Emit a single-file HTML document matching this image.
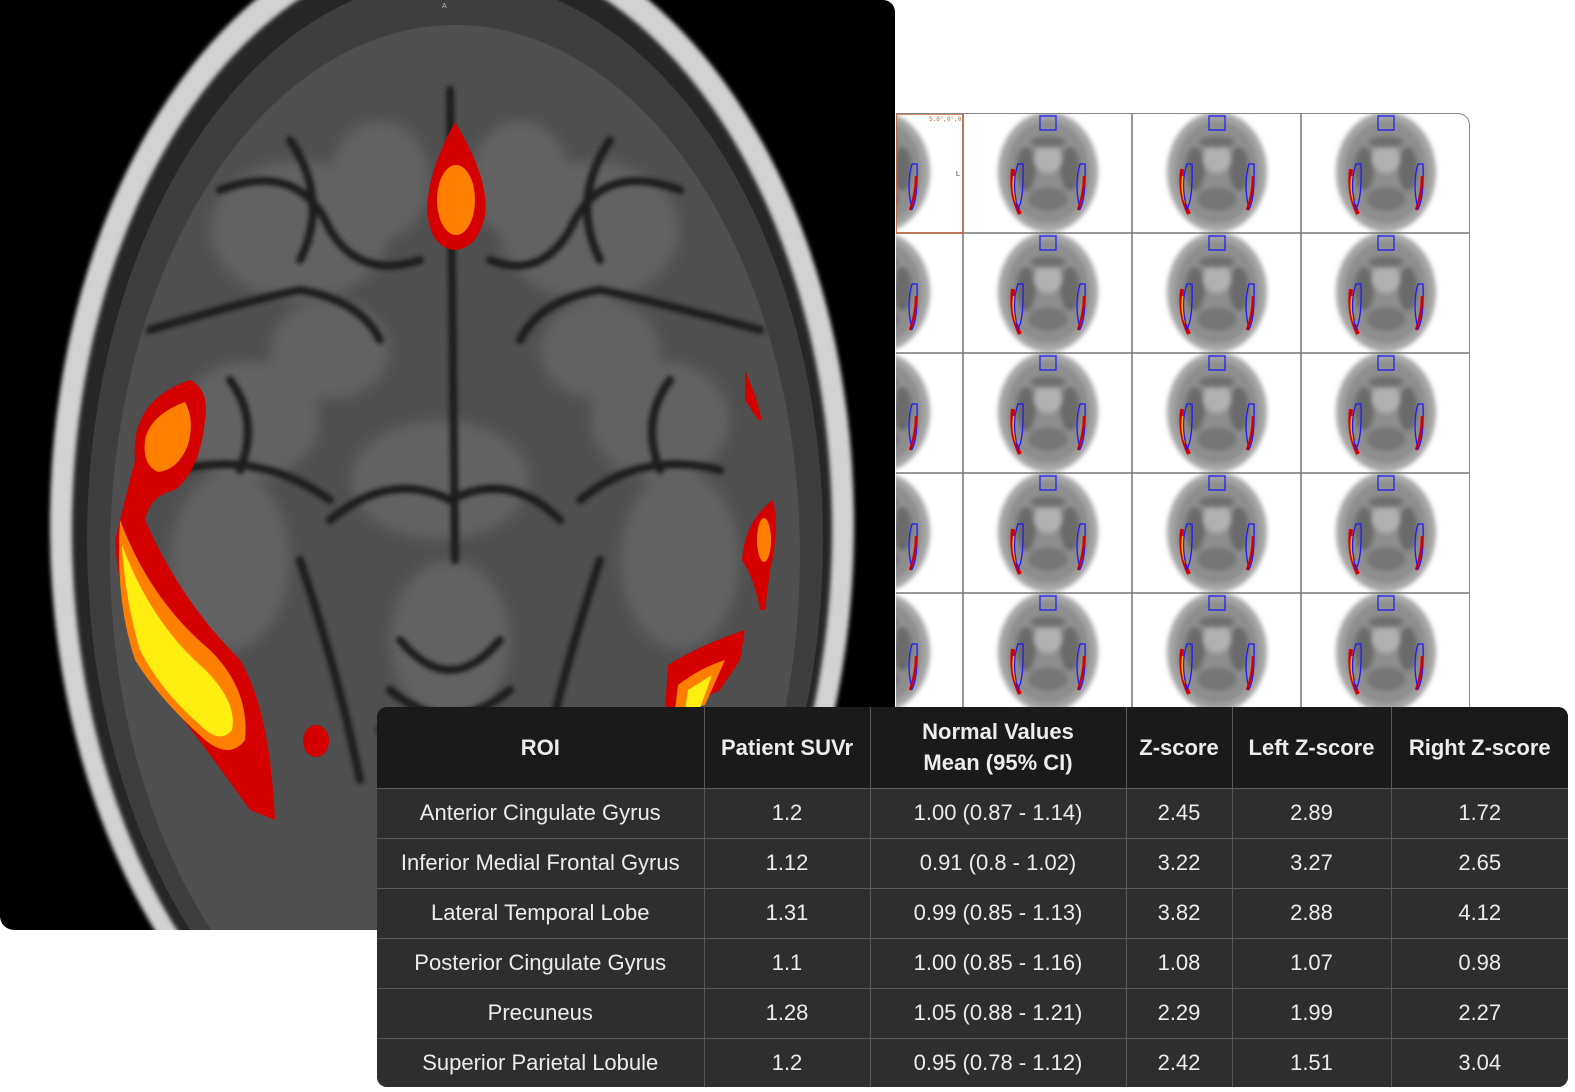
<!DOCTYPE html>
<html><head><meta charset="utf-8"><style>
html,body{margin:0;padding:0;background:#fff;width:1575px;height:1092px;overflow:hidden;position:relative;font-family:"Liberation Sans",Arial,sans-serif}
#mri{position:absolute;left:0;top:0;width:895px;height:930px;background:#000;border-radius:0 12px 0 14px;overflow:hidden}
#grid{position:absolute;left:896px;top:113px;width:574px;height:597px;background:#fff;border-top-right-radius:12px;overflow:hidden;border-top:1px solid #888;border-right:1px solid #888;box-sizing:border-box}
#wrap{position:absolute;left:377px;top:707px;width:1191px;height:380px;border-radius:10px;overflow:hidden;background:#2e2e2e}
table{width:1191px;border-collapse:collapse;color:#ececec;font-size:22px;text-align:center;table-layout:fixed}
th{background:#1a1a1a;font-weight:bold;height:80px;padding:0;border-right:1px solid #5a5a5a;line-height:31px;box-sizing:border-box}
td{background:#2e2e2e;height:50px;padding:0;border-right:1px solid #5a5a5a;border-top:1px solid #5a5a5a;box-sizing:border-box;white-space:nowrap}
th:last-child,td:last-child{border-right:none}
</style></head><body>
<div id="mri">
<svg width="895" height="930" viewBox="0 0 895 930">
<defs>
<filter id="bl"><feGaussianBlur stdDeviation="2"/></filter>
<filter id="bl2"><feGaussianBlur stdDeviation="6"/></filter>
</defs>
<ellipse cx="452" cy="525" rx="402" ry="602" fill="#d2d2d2" filter="url(#bl)"/>
<ellipse cx="452" cy="530" rx="380" ry="580" fill="#262626" filter="url(#bl)"/>
<ellipse cx="455" cy="540" rx="368" ry="562" fill="#3e3e3e"/>
<ellipse cx="455" cy="555" rx="345" ry="530" fill="#4f4f4f"/>
<g fill="#626262" filter="url(#bl2)">
<ellipse cx="300" cy="230" rx="90" ry="70"/><ellipse cx="590" cy="230" rx="90" ry="70"/>
<ellipse cx="380" cy="180" rx="50" ry="60"/><ellipse cx="520" cy="180" rx="50" ry="60"/>
<ellipse cx="250" cy="420" rx="70" ry="60"/><ellipse cx="660" cy="420" rx="70" ry="60"/>
<ellipse cx="440" cy="480" rx="90" ry="60"/><ellipse cx="450" cy="640" rx="60" ry="80"/>
<ellipse cx="230" cy="560" rx="60" ry="90"/><ellipse cx="680" cy="560" rx="60" ry="90"/>
<ellipse cx="600" cy="350" rx="60" ry="50"/><ellipse cx="330" cy="350" rx="60" ry="50"/>
</g>
<g fill="none" stroke="#1e1e1e" stroke-width="8" stroke-linecap="round" filter="url(#bl)">
<path d="M450 90 L455 560"/>
<path d="M220 190 Q300 160 330 230 Q360 280 420 260"/>
<path d="M680 190 Q600 160 570 230 Q540 280 490 260"/>
<path d="M150 330 Q250 300 300 290 Q360 300 380 340"/>
<path d="M760 330 Q650 300 600 290 Q540 300 520 340"/>
<path d="M330 520 Q390 470 450 500 Q510 470 560 520"/>
<path d="M300 560 Q340 680 360 780"/>
<path d="M600 560 Q560 680 540 780"/>
<path d="M180 470 Q260 450 330 500"/>
<path d="M720 470 Q640 450 580 500"/>
<path d="M230 380 Q260 420 240 470"/>
<path d="M670 380 Q640 420 660 470"/>
<path d="M400 640 Q450 700 500 640"/>
<path d="M390 690 Q450 740 510 690"/>
<path d="M380 730 Q450 790 520 730"/>
<path d="M290 140 Q330 200 300 260"/><path d="M610 140 Q570 200 600 260"/>
</g>
<path d="M455 122 Q490 180 485 215 Q478 248 455 250 Q430 248 427 210 Q428 170 455 122Z" fill="#d40000"/>
<ellipse cx="456" cy="200" rx="19" ry="35" fill="#ff8000"/>
<path d="M190 380 Q210 390 205 420 Q200 470 175 490 Q150 495 145 520 Q180 600 240 660 Q270 710 275 820 L250 810 Q200 740 160 690 Q120 620 115 540 Q125 500 135 460 Q130 400 190 380Z" fill="#d40000"/>
<path d="M185 402 Q195 420 188 445 Q178 470 158 472 Q142 465 145 440 Q150 415 185 402Z" fill="#ff8000"/>
<path d="M120 520 Q150 600 210 650 Q250 690 245 740 Q230 760 205 740 Q160 700 135 660 Q115 600 120 520Z" fill="#ff8000"/>
<path d="M122 545 Q150 620 200 665 Q238 700 232 730 Q220 745 200 725 Q160 690 140 650 Q125 600 122 545Z" fill="#ffee10"/>
<ellipse cx="316" cy="741" rx="13" ry="16" fill="#d40000"/>
<path d="M773 500 Q780 530 770 570 L765 610 L760 610 Q755 580 742 560 Q745 520 773 500Z" fill="#d40000"/>
<ellipse cx="764" cy="540" rx="7" ry="22" fill="#ff8000"/>
<path d="M745 370 L755 395 L762 420 L758 420 L745 400Z" fill="#d40000"/>
<path d="M745 630 L740 660 L720 690 L680 710 L665 710 L668 665 Q700 645 745 630Z" fill="#d40000"/>
<path d="M725 660 L705 705 L675 710 L678 685 Q700 668 725 660Z" fill="#ff8000"/>
<path d="M712 675 L700 708 L685 710 L688 690Z" fill="#ffee10"/>
<text x="442" y="8" fill="#bbb" font-size="7" font-family="Liberation Sans">A</text>
</svg>
</div>
<div id="grid">
<svg width="574" height="597" viewBox="0 0 574 597">
<defs>
<filter id="gb"><feGaussianBlur stdDeviation="2.5"/></filter>
<g id="b">
<g filter="url(#gb)">
<ellipse cx="0" cy="58" rx="50" ry="60" fill="#a4a4a4"/>
<ellipse cx="0" cy="58" rx="42" ry="52" fill="#8e8e8e"/>
<ellipse cx="-22" cy="55" rx="10" ry="22" fill="#6a6a6a"/>
<ellipse cx="22" cy="55" rx="10" ry="22" fill="#6a6a6a"/>
<ellipse cx="0" cy="45" rx="14" ry="14" fill="#b0b0b0"/>
<ellipse cx="0" cy="28" rx="18" ry="6" fill="#6f6f6f"/>
<ellipse cx="0" cy="85" rx="20" ry="12" fill="#777"/>
</g>
<path d="M-35 55 Q-38 80 -28 100" stroke="#d40000" stroke-width="4" fill="none"/>
<path d="M-34 62 Q-36 78 -31 90" stroke="#ffb000" stroke-width="2" fill="none"/>
<path d="M-30 50 q-7 20 0 45 q6 -10 5 -45z" fill="none" stroke="#1a1aff" stroke-width="1.3"/>
<path d="M32 50 q-6 20 0 45 q6 -10 5 -45z" fill="none" stroke="#1a1aff" stroke-width="1.3"/>
<path d="M36 62 Q36 80 30 96" stroke="#d40000" stroke-width="2.5" fill="none"/>
<path d="M-8 2 h16 v14 h-16z" fill="none" stroke="#1a1aff" stroke-width="1.2"/>
</g>
</defs>
<g>
<use href="#b" x="-16" y="0"/><use href="#b" x="152" y="0"/><use href="#b" x="321" y="0"/><use href="#b" x="490" y="0"/>
<use href="#b" x="-16" y="120"/><use href="#b" x="152" y="120"/><use href="#b" x="321" y="120"/><use href="#b" x="490" y="120"/>
<use href="#b" x="-16" y="240"/><use href="#b" x="152" y="240"/><use href="#b" x="321" y="240"/><use href="#b" x="490" y="240"/>
<use href="#b" x="-16" y="360"/><use href="#b" x="152" y="360"/><use href="#b" x="321" y="360"/><use href="#b" x="490" y="360"/>
<use href="#b" x="-16" y="480"/><use href="#b" x="152" y="480"/><use href="#b" x="321" y="480"/><use href="#b" x="490" y="480"/>
</g>
<g stroke="#777" stroke-width="1.5">
<line x1="67" y1="0" x2="67" y2="597"/><line x1="236" y1="0" x2="236" y2="597"/><line x1="405" y1="0" x2="405" y2="597"/>
<line x1="0" y1="119" x2="574" y2="119"/><line x1="0" y1="239" x2="574" y2="239"/><line x1="0" y1="359" x2="574" y2="359"/><line x1="0" y1="479" x2="574" y2="479"/>
</g>
<rect x="0" y="0" width="67" height="119" fill="none" stroke="#c0603a" stroke-width="1.5"/>
<text x="33" y="7" fill="#b06030" font-size="6" font-family="Liberation Mono">5.6°,0°,0°</text>
<text x="60" y="62" fill="#333" font-size="7" font-family="Liberation Sans">L</text>
</svg>
</div>
<div id="wrap"><table>
<colgroup><col style="width:327px"><col style="width:166px"><col style="width:256px"><col style="width:106px"><col style="width:159px"><col style="width:177px"></colgroup>
<tr><th style="height:81px">ROI</th><th>Patient SUVr</th><th>Normal Values<br>Mean (95% CI)</th><th>Z-score</th><th>Left Z-score</th><th>Right Z-score</th></tr>
<tr><td>Anterior Cingulate Gyrus</td><td>1.2</td><td>1.00 (0.87 - 1.14)</td><td>2.45</td><td>2.89</td><td>1.72</td></tr>
<tr><td>Inferior Medial Frontal Gyrus</td><td>1.12</td><td>0.91 (0.8 - 1.02)</td><td>3.22</td><td>3.27</td><td>2.65</td></tr>
<tr><td>Lateral Temporal Lobe</td><td>1.31</td><td>0.99 (0.85 - 1.13)</td><td>3.82</td><td>2.88</td><td>4.12</td></tr>
<tr><td>Posterior Cingulate Gyrus</td><td>1.1</td><td>1.00 (0.85 - 1.16)</td><td>1.08</td><td>1.07</td><td>0.98</td></tr>
<tr><td>Precuneus</td><td>1.28</td><td>1.05 (0.88 - 1.21)</td><td>2.29</td><td>1.99</td><td>2.27</td></tr>
<tr><td>Superior Parietal Lobule</td><td>1.2</td><td>0.95 (0.78 - 1.12)</td><td>2.42</td><td>1.51</td><td>3.04</td></tr>
</table></div>
</body></html>
